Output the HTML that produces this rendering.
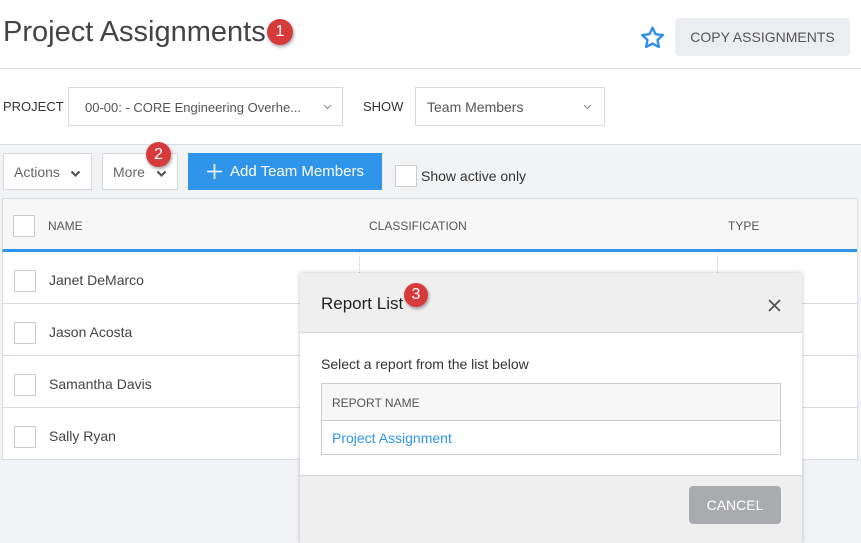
<!DOCTYPE html>
<html><head><style>
*{box-sizing:border-box;margin:0;padding:0}
body{width:861px;height:537px;position:relative;overflow:hidden;background:#f2f3f5;font-family:"Liberation Sans",sans-serif;color:#444}
.a{position:absolute}
.badge{position:absolute;width:26px;height:26px;border-radius:50%;background:#d63a3a;color:#fff;font-size:16px;text-align:center;line-height:26px;box-shadow:1px 2px 3px rgba(0,0,0,.35)}
.cb{position:absolute;width:22px;height:22px;border:1px solid #ccc;background:#fff}
.row{position:absolute;left:2px;width:856px;height:52px;border-bottom:1px solid #d8dce2;background:#fff}
.row span{position:absolute;left:46px;top:20px;font-size:14px;color:#444}
svg.ch{position:absolute}
</style></head><body>
<div class="a" style="left:0;top:0;width:861px;height:145px;background:#fff;border-bottom:1px solid #d8dce2"></div>
<div class="a" style="left:0;top:68px;width:861px;height:1px;background:#d8dce2"></div>
<div class="a" style="left:3px;top:16px;font-size:29px;color:#444">Project Assignments</div>
<div class="badge" style="left:267px;top:19px">1</div>
<svg class="a" style="left:639px;top:25px" width="27" height="26" viewBox="0 0 24 24"><path d="M12 2.5l2.9 6 6.6.8-4.9 4.5 1.3 6.5L12 17.1l-5.9 3.2 1.3-6.5L2.5 9.3l6.6-.8z" fill="none" stroke="#2c8ef0" stroke-width="2.2" stroke-linejoin="round"/></svg>
<div class="a" style="left:675px;top:18px;width:175px;height:38px;background:#ebedf0;border-radius:4px;font-size:14px;color:#555;text-align:center;line-height:38px">COPY ASSIGNMENTS</div>
<div class="a" style="left:3px;top:99px;font-size:13px;color:#333">PROJECT</div>
<div class="a" style="left:68px;top:87px;width:275px;height:39px;border:1px solid #d6d9de;background:#fff;font-size:13px;color:#555;padding:12px 0 0 16px">00-00: - CORE Engineering Overhe...<svg class="ch" style="right:10px;top:16px" width="9" height="6" viewBox="0 0 9 6"><path d="M1 1l3.5 3.5L8 1" fill="none" stroke="#888" stroke-width="1"/></svg></div>
<div class="a" style="left:363px;top:99px;font-size:13px;color:#333">SHOW</div>
<div class="a" style="left:415px;top:87px;width:190px;height:39px;border:1px solid #d6d9de;background:#fff;font-size:14px;color:#555;padding:11px 0 0 11px">Team Members<svg class="ch" style="right:12px;top:16px" width="9" height="6" viewBox="0 0 9 6"><path d="M1 1l3.5 3.5L8 1" fill="none" stroke="#888" stroke-width="1"/></svg></div>
<div class="a" style="left:3px;top:153px;width:89px;height:37px;border:1px solid #d6d9de;background:#fff;font-size:14px;color:#666;padding:10px 0 0 10px">Actions<svg class="ch" style="left:66px;top:16px" width="11" height="8" viewBox="0 0 11 8"><path d="M1.5 1.5l4 4 4-4" fill="none" stroke="#555" stroke-width="2.2"/></svg></div>
<div class="a" style="left:102px;top:153px;width:76px;height:37px;border:1px solid #d6d9de;background:#fff;font-size:14px;color:#666;padding:10px 0 0 10px">More<svg class="ch" style="left:53px;top:16px" width="11" height="8" viewBox="0 0 11 8"><path d="M1.5 1.5l4 4 4-4" fill="none" stroke="#555" stroke-width="2.2"/></svg></div>
<div class="badge" style="left:146px;top:142px;width:25px;height:25px;line-height:25px">2</div>
<div class="a" style="left:188px;top:153px;width:194px;height:37px;background:#2f95ea;color:#fff;font-size:15px;line-height:38px;padding-left:18px"><svg style="position:absolute;left:19px;top:11px" width="15" height="15" viewBox="0 0 15 15"><path d="M7.5 0v15M0 7.5h15" stroke="#fff" stroke-width="1.6"/></svg><span style="margin-left:24px">Add Team Members</span></div>
<div class="cb" style="left:395px;top:165px"></div>
<div class="a" style="left:421px;top:168px;font-size:14px;color:#333">Show active only</div>
<div class="a" style="left:2px;top:198px;width:856px;height:54px;background:#f7f7f8;border:1px solid #d8dce2;border-bottom:3px solid #2f95ea"></div>
<div class="cb" style="left:13px;top:215px"></div>
<div class="a" style="left:48px;top:219px;font-size:12px;color:#555">NAME</div>
<div class="a" style="left:369px;top:219px;font-size:12px;color:#555">CLASSIFICATION</div>
<div class="a" style="left:728px;top:219px;font-size:12px;color:#555">TYPE</div>
<div class="row" style="top:252px;border-left:1px solid #d8dce2"><div class="cb" style="left:11px;top:18px"></div><span>Janet DeMarco</span></div>
<div class="row" style="top:304px;border-left:1px solid #d8dce2"><div class="cb" style="left:11px;top:18px"></div><span>Jason Acosta</span></div>
<div class="row" style="top:356px;border-left:1px solid #d8dce2"><div class="cb" style="left:11px;top:18px"></div><span>Samantha Davis</span></div>
<div class="row" style="top:408px;border-left:1px solid #d8dce2"><div class="cb" style="left:11px;top:18px"></div><span>Sally Ryan</span></div>
<div class="a" style="left:359px;top:252px;height:21px;border-left:1px dotted #ccc"></div>
<div class="a" style="left:717px;top:252px;height:21px;border-left:1px dotted #ccc"></div>
<div class="a" style="left:857px;top:198px;width:1px;height:263px;background:#d8dce2"></div>
<div class="a" style="left:300px;top:273px;width:502px;height:270px;background:#fff;box-shadow:0 0 4px rgba(0,0,0,.25)">
 <div class="a" style="left:0;top:0;width:502px;height:60px;background:#efefef;border-bottom:1px solid #d8d8d8"></div>
 <div class="a" style="left:21px;top:21px;font-size:17px;color:#222">Report List</div>
 <div class="badge" style="left:104px;top:10px;width:24px;height:24px;line-height:24px">3</div>
 <svg class="a" style="left:468px;top:26px" width="13" height="13" viewBox="0 0 13 13"><path d="M1 1l11 11M12 1L1 12" stroke="#555" stroke-width="1.8"/></svg>
 <div class="a" style="left:21px;top:83px;font-size:14px;color:#333">Select a report from the list below</div>
 <div class="a" style="left:21px;top:110px;width:460px;height:72px;border:1px solid #ccc">
  <div style="height:37px;background:#f7f7f7;border-bottom:1px solid #ccc;font-size:12px;color:#555;padding:12px 0 0 10px">REPORT NAME</div>
  <div style="font-size:14px;color:#2f95ea;padding:9px 0 0 10px">Project Assignment</div>
 </div>
 <div class="a" style="left:0;top:202px;width:502px;height:68px;background:#efefef;border-top:1px solid #d8d8d8"></div>
 <div class="a" style="left:389px;top:213px;width:92px;height:38px;background:#a9abae;border-radius:4px;color:#fff;font-size:14px;text-align:center;line-height:38px">CANCEL</div>
</div>
</body></html>
